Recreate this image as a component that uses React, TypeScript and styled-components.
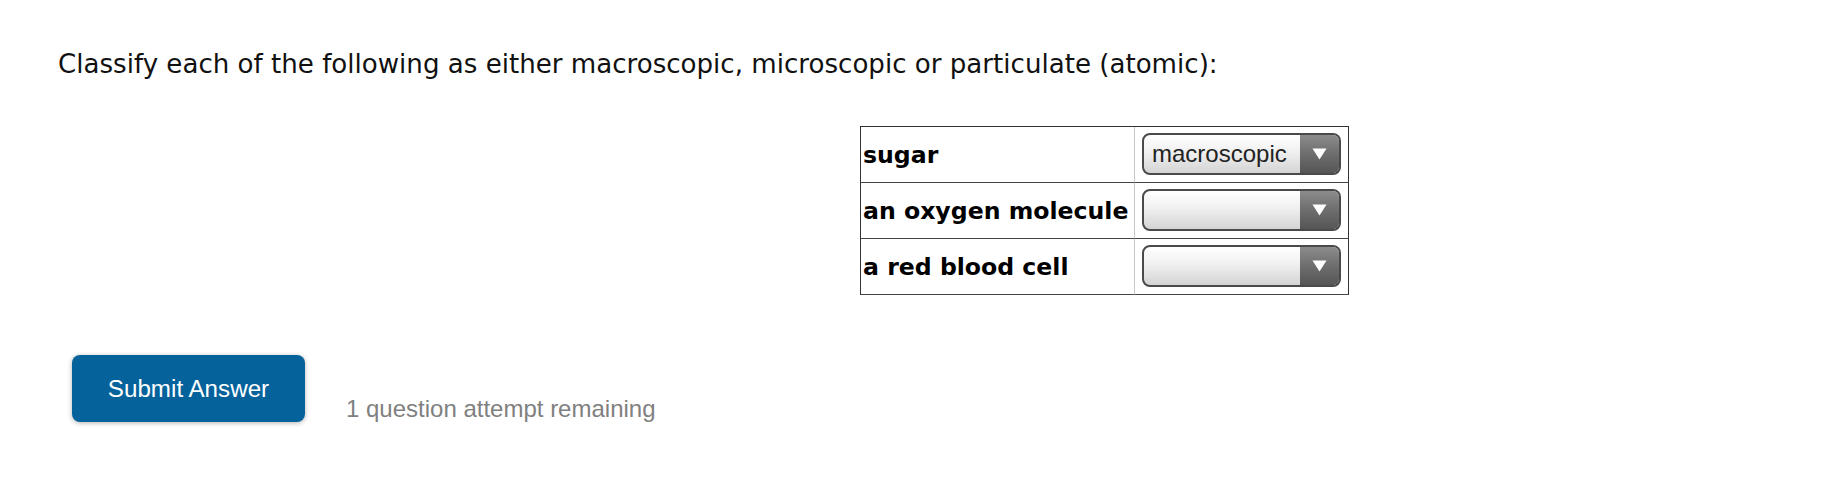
//----------------------------------------- Imports -----------------------------------------//
import React from 'react';
import styled, { createGlobalStyle } from 'styled-components';

//----------------------------------------- Data -----------------------------------------//
const items = [
  { label: 'sugar', value: 'macroscopic' },
  { label: 'an oxygen molecule', value: '' },
  { label: 'a red blood cell', value: '' },
];

//----------------------------------------- Components -----------------------------------------//
const Dropdown: React.FC<{ value: string }> = ({ value }) => (
  <SelectBox role="combobox" aria-expanded={false}>
    <SelectText>{value}</SelectText>
    <ArrowBox>
      <svg width="15" height="12" viewBox="0 0 15 12">
        <path d="M0.5 0.5 H14.5 L7.5 11.5 Z" fill="#fff" />
      </svg>
    </ArrowBox>
  </SelectBox>
);

const App: React.FC = () => (
  <>
    <GlobalStyle />
    <Page>
      <Question>
        Classify each of the following as either macroscopic, microscopic or particulate (atomic):
      </Question>
      <TableWrap>
        <Table>
          {items.map((item) => (
            <React.Fragment key={item.label}>
              <LabelCell>{item.label}</LabelCell>
              <ChoiceCell>
                <Dropdown value={item.value} />
              </ChoiceCell>
            </React.Fragment>
          ))}
        </Table>
      </TableWrap>
      <Footer>
        <SubmitButton type="button">Submit Answer</SubmitButton>
        <Attempts>1 question attempt remaining</Attempts>
      </Footer>
    </Page>
  </>
);

export default App;

//----------------------------------------- Style -----------------------------------------//
const GlobalStyle = createGlobalStyle`
  html, body {
    margin: 0;
    padding: 0;
    background: #ffffff;
  }
`;

const Page = styled.div`
  width: 1826px;
  height: 479px;
  box-sizing: border-box;
  padding: 49px 0 0 58px;
  overflow: hidden;
`;

const Question = styled.div`
  font-family: "DejaVu Sans", Verdana, sans-serif;
  font-size: 26.1px;
  line-height: 30px;
  color: #111;
  white-space: nowrap;
`;

const TableWrap = styled.div`
  margin-top: 47px;
  padding-left: 802px;
`;

const Table = styled.div`
  display: inline-grid;
  grid-template-columns: 274px 213px;
  border: 1px solid #333;
  border-bottom: none;
`;

const LabelCell = styled.div`
  box-sizing: border-box;
  height: 56px;
  display: flex;
  align-items: center;
  padding: 0 2px;
  border-bottom: 1px solid #444;
  border-right: 1px solid #c8c8c8;
  font-family: "DejaVu Sans", Verdana, sans-serif;
  font-weight: bold;
  font-size: 23.6px;
  color: #000;
  white-space: nowrap;
`;

const ChoiceCell = styled.div`
  box-sizing: border-box;
  height: 56px;
  display: flex;
  align-items: center;
  padding: 0 6px 1px 7px;
  border-bottom: 1px solid #444;
`;

const SelectBox = styled.div`
  box-sizing: border-box;
  width: 199px;
  height: 42px;
  display: flex;
  border: 2px solid #4a4a4a;
  border-radius: 8px;
  overflow: hidden;
  background: linear-gradient(to bottom, #ffffff 0%, #f0f0f0 45%, #d4d4d4 100%);
`;

const SelectText = styled.div`
  flex: 1;
  display: flex;
  align-items: center;
  padding-left: 8px;
  font-family: "Liberation Sans", Arial, sans-serif;
  font-size: 24px;
  color: #222;
`;

const ArrowBox = styled.div`
  width: 39px;
  display: flex;
  align-items: center;
  justify-content: center;
  background: linear-gradient(to bottom, #8c8c8c 0%, #6e6e6e 50%, #555555 100%);
`;

const Footer = styled.div`
  display: flex;
  align-items: flex-start;
  margin-top: 60px;
  padding-left: 14px;
`;

const SubmitButton = styled.button`
  width: 233px;
  height: 67px;
  border: none;
  border-radius: 8px;
  background: #05629b;
  color: #fff;
  font-family: "Liberation Sans", Arial, sans-serif;
  font-size: 24.2px;
  box-shadow: 0 1px 5px rgba(0, 0, 0, 0.3);
  cursor: pointer;
  padding: 0;
`;

const Attempts = styled.div`
  margin: 40px 0 0 41px;
  font-family: "Liberation Sans", Arial, sans-serif;
  font-size: 24px;
  line-height: 28px;
  color: #808080;
`;
